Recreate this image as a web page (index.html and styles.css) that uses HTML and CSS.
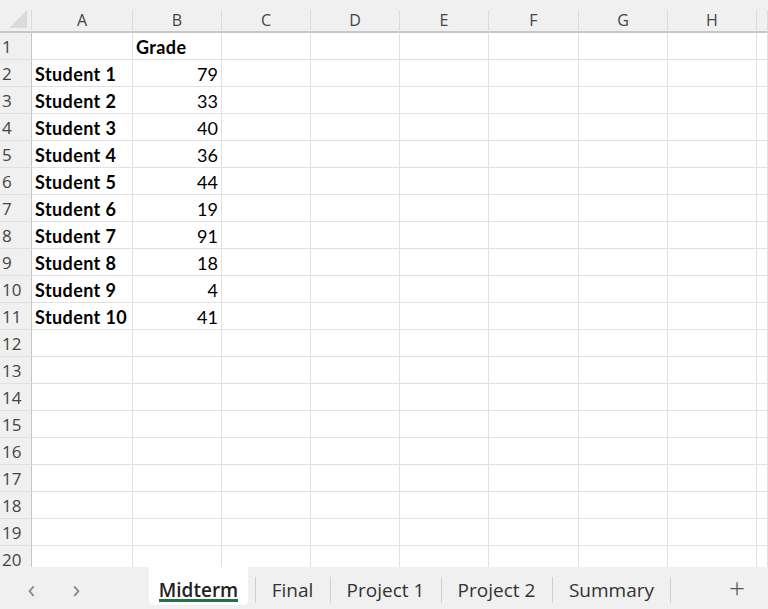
FILE: index.html
```html
<!DOCTYPE html>
<html lang="en">
<head>
    <meta charset="UTF-8">
    <title>Grades</title>
    <link rel="stylesheet" href="styles.css">
</head>
<body>
    <div id="sheet">
        <div class="head corner"><span class="tri"></span></div>
        <div class="head">A</div>
        <div class="head">B</div>
        <div class="head">C</div>
        <div class="head">D</div>
        <div class="head">E</div>
        <div class="head">F</div>
        <div class="head">G</div>
        <div class="head">H</div>
        <div class="head"></div>
    </div>

    <div id="tabs">
        <div class="nav">
            <span class="arrow">&lsaquo;</span>
            <span class="arrow">&rsaquo;</span>
        </div>
        <div class="tab active"><span>Midterm</span></div>
        <div class="tab w-final">Final</div>
        <div class="tab w-proj">Project 1</div>
        <div class="tab w-proj">Project 2</div>
        <div class="tab w-sum">Summary</div>
        <div class="add">+</div>
    </div>

    <script>
        const grades = [79, 33, 40, 36, 44, 19, 91, 18, 4, 41];
        const sheet = document.getElementById('sheet');

        function cell(text, cls) {
            const div = document.createElement('div');
            div.className = cls;
            div.textContent = text;
            sheet.appendChild(div);
        }

        for (let r = 1; r <= 20; r++) {
            cell(r, 'rownum');
            if (r === 1) {
                cell('', 'cell');
                cell('Grade', 'cell bold');
            } else if (r <= 11) {
                cell('Student ' + (r - 1), 'cell bold');
                cell(grades[r - 2], 'cell num');
            } else {
                cell('', 'cell');
                cell('', 'cell');
            }
            for (let c = 0; c < 7; c++) {
                cell('', 'cell');
            }
        }
    </script>
</body>
</html>
```

FILE: styles.css
```css
* {
    margin: 0;
    padding: 0;
    box-sizing: border-box;
}

body {
    width: 768px;
    height: 609px;
    overflow: hidden;
    background-color: #ffffff;
    font-family: "Open Sans", sans-serif;
    display: flex;
    flex-direction: column;
}

#sheet {
    flex: 1;
    overflow: hidden;
    padding-top: 10px;
    background: linear-gradient(#f0f0f0 0, #f0f0f0 10px, #ffffff 10px);
    display: grid;
    grid-template-columns: 32px 101px 89px 89px 89px 89px 90px 89px 89px 11px;
    grid-auto-rows: 27px;
    grid-template-rows: 23px;
}

.head {
    background-color: #f0f0f0;
    border-right: 1px solid #dcdcdc;
    border-bottom: 2px solid #c6c6c6;
    color: #444;
    font-size: 16px;
    text-align: center;
    line-height: 21px;
}

.corner {
    position: relative;
}

.tri {
    position: absolute;
    left: 9px;
    top: 0;
    width: 18px;
    height: 18px;
    background-color: #dadada;
    clip-path: polygon(100% 0, 100% 100%, 0 100%);
}

.rownum {
    background-color: #f0f0f0;
    border-right: 1px solid #c6c6c6;
    border-bottom: 1px solid #e1e1e1;
    color: #444;
    font-size: 17px;
    padding-left: 2px;
    line-height: 27px;
}

.cell {
    border-right: 1px solid #e1e1e1;
    border-bottom: 1px solid #e1e1e1;
    font-family: Lato, sans-serif;
    font-size: 18px;
    color: #000;
    padding: 0 3px;
    line-height: 28px;
    white-space: nowrap;
}

.bold {
    font-weight: bold;
    letter-spacing: 0.4px;
}

.num {
    text-align: right;
}

#tabs {
    height: 42px;
    flex-shrink: 0;
    background-color: #f0f0f0;
    display: flex;
    align-items: flex-start;
    color: #333;
    font-size: 19px;
}

.nav {
    width: 149px;
    display: flex;
    gap: 28px;
    padding: 6px 0 0 23px;
}

.arrow {
    color: #888;
    font-size: 26px;
    line-height: 30px;
    width: 17px;
    text-align: center;
}

.tab {
    height: 42px;
    line-height: 46px;
    text-align: center;
    position: relative;
}

.tab + .tab::before {
    content: "";
    position: absolute;
    left: 0;
    top: 10px;
    height: 26px;
    border-left: 1px solid #d0d0d0;
}

.w-final {
    margin-left: 7px;
    width: 75px;
}

.w-proj {
    width: 111px;
}

.w-sum {
    width: 119px;
}

.w-sum::after {
    content: "";
    position: absolute;
    right: 0;
    top: 10px;
    height: 26px;
    border-left: 1px solid #d0d0d0;
}

.tab.active {
    width: 99px;
    height: 38px;
    background-color: #fff;
    border-radius: 0 0 4px 4px;
    color: #222;
    font-weight: 600;
}

.tab.active span {
    display: inline-block;
    height: 35px;
    border-bottom: 3px solid #217346;
    line-height: 46px;
}

.add {
    margin-left: auto;
    width: 62px;
    text-align: center;
    font-size: 28px;
    font-weight: 300;
    line-height: 40px;
    color: #555;
}
```
